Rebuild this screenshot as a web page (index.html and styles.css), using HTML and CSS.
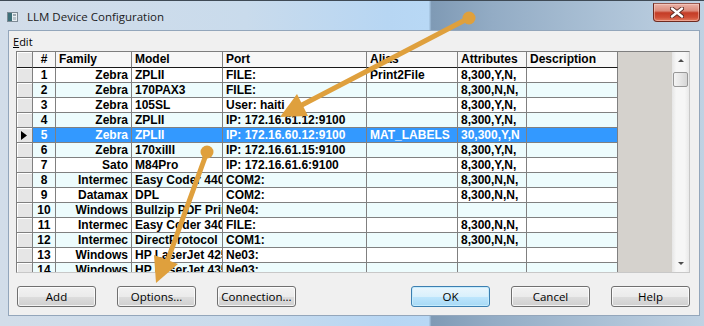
FILE: index.html
```html
<!DOCTYPE html>
<html>
<head>
<meta charset="utf-8">
<title>LLM Device Configuration</title>
<link rel="stylesheet" href="styles.css">
</head>
<body>
<div class="window">
  <div class="titlebar">
    <svg class="appicon" width="11" height="10" viewBox="0 0 11 10">
      <rect x="0.5" y="0.5" width="10" height="9" fill="#e8eef2" stroke="#7d8a94"/>
      <rect x="1" y="1" width="4" height="8" fill="#3d6f78"/>
      <rect x="6" y="2" width="3" height="2" fill="#9aa7b0"/>
      <rect x="6" y="5" width="3" height="3" fill="#b9c4cc"/>
    </svg>
    <span class="title">LLM Device Configuration</span>
    <div class="close">
      <svg width="14" height="11" viewBox="0 0 14 11">
        <path d="M2 1.5 L12 9.5 M12 1.5 L2 9.5" stroke="#5a2a22" stroke-width="4.2" stroke-linecap="round"/>
        <path d="M2 1.5 L12 9.5 M12 1.5 L2 9.5" stroke="#ffffff" stroke-width="2.4" stroke-linecap="round"/>
      </svg>
    </div>
  </div>
  <div class="client">
    <div class="menubar"><span class="menuitem"><u>E</u>dit</span></div>
    <div class="grid">
      <div class="table">
        <div class="row head">
          <div class="ind"></div><div class="c num">#</div><div class="c">Family</div><div class="c">Model</div><div class="c">Port</div><div class="c">Alias</div><div class="c">Attributes</div><div class="c">Description</div>
        </div>
        <div class="row"><div class="ind"></div><div class="c num">1</div><div class="c fam">Zebra</div><div class="c">ZPLII</div><div class="c">FILE:</div><div class="c">Print2File</div><div class="c">8,300,Y,N,</div><div class="c"></div></div>
        <div class="row alt"><div class="ind"></div><div class="c num">2</div><div class="c fam">Zebra</div><div class="c">170PAX3</div><div class="c">FILE:</div><div class="c"></div><div class="c">8,300,N,N,</div><div class="c"></div></div>
        <div class="row"><div class="ind"></div><div class="c num">3</div><div class="c fam">Zebra</div><div class="c">105SL</div><div class="c">User: haiti</div><div class="c"></div><div class="c">8,300,Y,N,</div><div class="c"></div></div>
        <div class="row alt"><div class="ind"></div><div class="c num">4</div><div class="c fam">Zebra</div><div class="c">ZPLII</div><div class="c">IP: 172.16.61.12:9100</div><div class="c"></div><div class="c">8,300,Y,N,</div><div class="c"></div></div>
        <div class="row sel"><div class="ind"><svg width="6" height="9" viewBox="0 0 6 9"><path d="M0 0 L6 4.5 L0 9 Z" fill="#000"/></svg></div><div class="c num">5</div><div class="c fam">Zebra</div><div class="c">ZPLII</div><div class="c">IP: 172.16.60.12:9100</div><div class="c">MAT_LABELS</div><div class="c">30,300,Y,N</div><div class="c"></div></div>
        <div class="row alt"><div class="ind"></div><div class="c num">6</div><div class="c fam">Zebra</div><div class="c">170xiIII</div><div class="c">IP: 172.16.61.15:9100</div><div class="c"></div><div class="c">8,300,Y,N,</div><div class="c"></div></div>
        <div class="row"><div class="ind"></div><div class="c num">7</div><div class="c fam">Sato</div><div class="c">M84Pro</div><div class="c">IP: 172.16.61.6:9100</div><div class="c"></div><div class="c">8,300,Y,N,</div><div class="c"></div></div>
        <div class="row alt"><div class="ind"></div><div class="c num">8</div><div class="c fam">Intermec</div><div class="c">Easy Coder 4400</div><div class="c">COM2:</div><div class="c"></div><div class="c">8,300,N,N,</div><div class="c"></div></div>
        <div class="row"><div class="ind"></div><div class="c num">9</div><div class="c fam">Datamax</div><div class="c">DPL</div><div class="c">COM2:</div><div class="c"></div><div class="c">8,300,N,N,</div><div class="c"></div></div>
        <div class="row alt"><div class="ind"></div><div class="c num">10</div><div class="c fam">Windows</div><div class="c">Bullzip PDF Printer</div><div class="c">Ne04:</div><div class="c"></div><div class="c"></div><div class="c"></div></div>
        <div class="row"><div class="ind"></div><div class="c num">11</div><div class="c fam">Intermec</div><div class="c">Easy Coder 3400</div><div class="c">FILE:</div><div class="c"></div><div class="c">8,300,N,N,</div><div class="c"></div></div>
        <div class="row alt"><div class="ind"></div><div class="c num">12</div><div class="c fam">Intermec</div><div class="c">DirectProtocol</div><div class="c">COM1:</div><div class="c"></div><div class="c">8,300,N,N,</div><div class="c"></div></div>
        <div class="row"><div class="ind"></div><div class="c num">13</div><div class="c fam">Windows</div><div class="c">HP LaserJet 4250</div><div class="c">Ne03:</div><div class="c"></div><div class="c"></div><div class="c"></div></div>
        <div class="row alt"><div class="ind"></div><div class="c num">14</div><div class="c fam">Windows</div><div class="c">HP LaserJet 4350</div><div class="c">Ne03:</div><div class="c"></div><div class="c"></div><div class="c"></div></div>
      </div>
      <div class="filler"></div>
      <div class="vscroll">
        <div class="sbtn"><span class="tri up"></span></div>
        <div class="thumb"></div>
        <div class="track"></div>
        <div class="sbtn"><span class="tri down"></span></div>
      </div>
    </div>
    <div class="buttons">
      <button class="btn">Add</button>
      <button class="btn">Options...</button>
      <button class="btn">Connection...</button>
      <button class="btn ok">OK</button>
      <button class="btn">Cancel</button>
      <button class="btn">Help</button>
    </div>
  </div>
  <svg class="arrows" width="704" height="326" viewBox="0 0 704 326">
    <g fill="#dfa03d" stroke="#dfa03d">
      <line x1="469" y1="18" x2="300" y2="106" stroke-width="5" stroke-linecap="round"/>
      <circle cx="469" cy="18" r="6.5" stroke="none"/>
      <polygon points="280,117 308,116 297,94" stroke="none"/>
      <line x1="207" y1="152" x2="167" y2="262" stroke-width="5" stroke-linecap="round"/>
      <circle cx="207" cy="152" r="6.5" stroke="none"/>
      <polygon points="156,283 178,264 154,255" stroke="none"/>
    </g>
  </svg>
</div>
</body>
</html>
```

FILE: styles.css
```css
html, body {
  margin: 0;
  padding: 0;
}
body {
  width: 704px;
  height: 326px;
  overflow: hidden;
  font-family: "Open Sans", "Noto Sans", sans-serif;
}
.window {
  position: relative;
  width: 704px;
  height: 326px;
  box-sizing: border-box;
  display: flex;
  flex-direction: column;
  padding-bottom: 10px;
  background: linear-gradient(to right, #d2dde9 0%, #c9dbec 35%, #b7d6f3 55%, #b8d8f5 60.9%, #7f9ab5 61.3%, #93acc5 70%, #aac0d5 85%, #c0d2e3 100%);
  border-top: 1px solid #3f4a55;
}
.titlebar {
  height: 29px;
  display: flex;
  align-items: center;
  flex: none;
}
.appicon {
  margin-left: 7px;
  margin-top: 2px;
}
.title {
  margin-left: 9px;
  font-size: 11.5px;
  color: #1b1b1b;
  margin-top: 1px;
}
.close {
  margin-left: auto;
  margin-right: 4px;
  align-self: flex-start;
  margin-top: 2px;
  width: 45px;
  height: 17px;
  border: 1px solid #6e2a20;
  border-top-color: #9a5a50;
  border-radius: 0 0 4px 4px;
  background: linear-gradient(#eab2a6 0%, #dc8b7b 40%, #c43c26 52%, #cf4e36 78%, #e27c60 100%);
  box-shadow: inset 0 0 0 1px rgba(255, 220, 210, 0.45);
  display: flex;
  align-items: center;
  justify-content: center;
}
.client {
  flex: 1;
  margin: 0 4px 0 8px;
  border: 1px solid #93a6bb;
  background: #f0f0f0;
  display: flex;
  flex-direction: column;
}
.menubar {
  height: 20px;
  display: flex;
  align-items: center;
  padding-left: 4px;
  font-size: 11px;
  color: #000;
}
.menuitem u {
  text-decoration: underline;
  text-underline-offset: 1px;
}
.grid {
  margin-left: 7px;
  width: 674px;
  height: 222px;
  box-sizing: border-box;
  border: 1px solid #7e7e7e;
  border-right-color: #c8c8c8;
  border-bottom-color: #c8c8c8;
  display: flex;
  overflow: hidden;
}
.table {
  width: 601px;
  flex: none;
  overflow: hidden;
  font-family: "Liberation Sans", Arial, sans-serif;
  font-weight: bold;
  font-size: 12px;
  color: #000;
}
.row {
  display: grid;
  grid-template-columns: 16px 23px 76px 91px 144px 91px 69px 91px;
  height: 15px;
  background: #ffffff;
}
.row.alt {
  background: #edfcfd;
}
.row.sel {
  background: #3399ff;
  color: #ffffff;
}
.row.head {
  height: 16px;
  background: #f7f7f7;
}
.c {
  box-sizing: border-box;
  border-right: 1px solid #808080;
  border-bottom: 1px solid #808080;
  padding: 0 3px;
  line-height: 14px;
  white-space: nowrap;
  overflow: hidden;
}
.head .c {
  border-bottom-color: #1a1a1a;
  line-height: 15px;
}
.c.num {
  text-align: center;
  padding: 0;
}
.c.fam {
  text-align: right;
}
.ind {
  box-sizing: border-box;
  background: #e6e6e6;
  border-right: 1px solid #808080;
  border-bottom: 1px solid #808080;
  box-shadow: inset 1px 1px 0 #ffffff;
  display: flex;
  align-items: center;
  padding-left: 4px;
}
.head .ind {
  border-bottom-color: #1a1a1a;
}
.filler {
  flex: 1;
  background: #d5d2cd;
}
.vscroll {
  width: 17px;
  flex: none;
  display: flex;
  flex-direction: column;
  background: linear-gradient(to right, #e6e6e6 0%, #f6f6f6 25%, #f6f6f6 75%, #e9e9e9 100%);
}
.sbtn {
  height: 17px;
  flex: none;
  display: flex;
  align-items: center;
  justify-content: center;
}
.tri {
  width: 0;
  height: 0;
  border-left: 3px solid transparent;
  border-right: 3px solid transparent;
}
.tri.up {
  border-bottom: 3px solid #4d4d4d;
}
.tri.down {
  border-top: 3px solid #4d4d4d;
}
.thumb {
  height: 15px;
  margin: 3px 1px 0 1px;
  flex: none;
  box-sizing: border-box;
  border: 1px solid #979797;
  border-radius: 2px;
  background: linear-gradient(to right, #f4f4f4, #e6e6e6 50%, #d6d6d6);
}
.track {
  flex: 1;
}
.buttons {
  display: flex;
  gap: 21px;
  margin-top: 13px;
  padding: 0 9px 0 8px;
}
.btn {
  width: 79px;
  height: 21px;
  box-sizing: border-box;
  border: 1px solid #707070;
  border-radius: 3px;
  background: linear-gradient(#f2f2f2 0%, #ebebeb 50%, #dddddd 51%, #cfcfcf 100%);
  box-shadow: inset 0 0 0 1px rgba(255, 255, 255, 0.75);
  font-family: "Open Sans", "Noto Sans", sans-serif;
  font-size: 11.5px;
  color: #000;
  padding: 0;
  line-height: 18px;
}
.btn.ok {
  margin-left: auto;
  border-color: #3c7fb1;
  background: linear-gradient(#eaf6fd 0%, #d9f0fc 50%, #bee6fd 51%, #a7d9f5 100%);
  box-shadow: inset 0 0 0 1px #c6ecfd;
}
.arrows {
  position: absolute;
  left: 0;
  top: -1px;
  pointer-events: none;
}
```
